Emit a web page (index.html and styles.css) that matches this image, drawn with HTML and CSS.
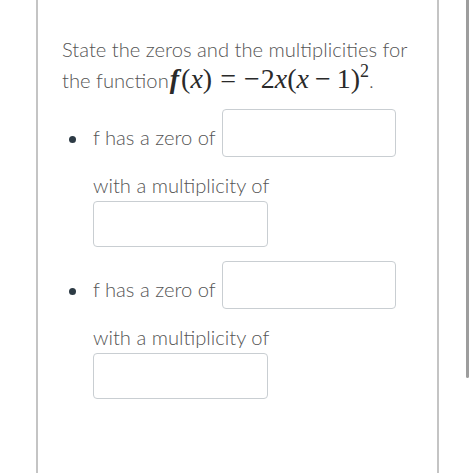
FILE: index.html
```html
<!DOCTYPE html>
<html lang="en">
<head>
<meta charset="utf-8">
<link rel="stylesheet" href="styles.css">
</head>
<body>
<div class="page">
  <div class="card">
    <p class="question">State the zeros and the multiplicities for the function<span class="math"><i class="mi f">f</i><span class="mp">(</span><i class="mi">x</i><span class="mp">)</span><span class="mo rel">=</span><span class="mo bin-lead">&minus;</span><span class="mn">2</span><i class="mi">x</i><span class="mp">(</span><i class="mi">x</i><span class="mo bin">&minus;</span><span class="mn">1</span><span class="mp">)</span><sup class="sup">2</sup></span>.</p>
    <ul class="items">
      <li class="item">
        <div class="line"><span class="text">f has a zero of</span><span class="box"></span></div>
        <p class="sub">with a multiplicity of</p>
        <span class="box"></span>
      </li>
      <li class="item">
        <div class="line"><span class="text">f has a zero of</span><span class="box"></span></div>
        <p class="sub">with a multiplicity of</p>
        <span class="box"></span>
      </li>
    </ul>
  </div>
  <div class="scrollbar"></div>
</div>
</body>
</html>
```
FILE: styles.css
```css
html, body {
  margin: 0;
  padding: 0;
  background: #ffffff;
}
body {
  width: 474px;
  height: 473px;
  overflow: hidden;
  font-family: Lato, "Open Sans", sans-serif;
  font-weight: 300;
  color: #555555;
}
.page {
  position: relative;
  height: 473px;
  padding-left: 36px;
}
.card {
  box-sizing: border-box;
  width: 403px;
  height: 473px;
  border-left: 2px solid #c4c4c4;
  border-right: 2px solid #c4c4c4;
  padding: 34px 24px 0 24px;
}
.question {
  margin: 0;
  font-size: 20.2px;
  line-height: 30px;
}
.math {
  font-family: "Liberation Serif", "DejaVu Serif", serif;
  font-size: 28px;
  font-weight: 400;
  color: #2a2a2a;
  white-space: nowrap;
}
.mi {
  font-style: italic;
}
.mi.f {
  font-weight: 700;
  padding: 0 2px 0 1px;
}
.rel {
  padding: 0 8px;
}
.bin-lead {
  padding-right: 1px;
}
.bin {
  padding: 0 6px;
}
.sup {
  font-size: 18px;
  vertical-align: 11px;
  line-height: 0;
}
.items {
  list-style: none;
  margin: 14px 0 0 0;
  padding: 0;
  font-size: 20.2px;
  line-height: 30px;
}
.item {
  display: grid;
  grid-template-columns: 31px auto;
  justify-items: start;
  margin-bottom: 14px;
}
.item::before {
  content: "";
  grid-column: 1;
  grid-row: 1;
  width: 7px;
  height: 7px;
  border-radius: 50%;
  background: #2d3b45;
  margin: 27px 0 0 7px;
}
.line, .sub, .item > .box {
  grid-column: 2;
}
.line {
  display: flex;
  align-items: flex-end;
  gap: 6px;
}
.line > .box {
  width: 174px;
  height: 48px;
}
.text {
  margin-bottom: 5px;
}
.sub {
  margin: 13px 0 0 0;
}
.box {
  display: block;
  box-sizing: border-box;
  width: 175px;
  height: 46px;
  border: 1px solid #c9ced2;
  border-radius: 4px;
  background: #ffffff;
}
.item > .box {
  margin-top: 1px;
}
.scrollbar {
  position: absolute;
  left: 466px;
  top: 0;
  width: 3px;
  height: 378px;
  background: #9d9d9d;
  border-radius: 0 0 2px 2px;
}
```
